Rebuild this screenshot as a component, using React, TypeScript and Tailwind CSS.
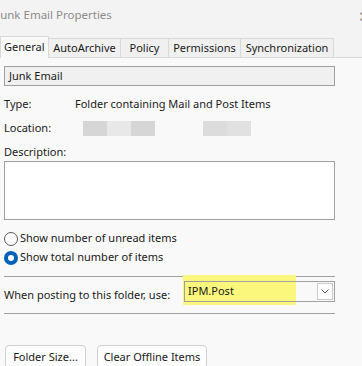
import React from "react";

const tabs = [
  { name: "General", w: "w-[49px]" },
  { name: "AutoArchive", w: "w-[72px]" },
  { name: "Policy", w: "w-[48px]" },
  { name: "Permissions", w: "w-[72px]" },
  { name: "Synchronization", w: "w-[93px]" },
];

function Radio({ checked, label }: { checked?: boolean; label: string }) {
  return (
    <div className="flex items-center h-[19px]">
      {checked ? (
        <span className="w-[14px] h-[14px] rounded-full bg-[#005fb8] flex items-center justify-center ml-[4px]">
          <span className="w-[6px] h-[6px] rounded-full bg-white" />
        </span>
      ) : (
        <span className="w-[14px] h-[14px] rounded-full border border-[#5a5a5a] bg-[#fcfcfc] ml-[4px]" />
      )}
      <span className="ml-[2px]">{label}</span>
    </div>
  );
}

export default function App() {
  return (
    <div
      className="w-[362px] h-[366px] overflow-hidden bg-[#f3f3f3] text-[11px] text-[#1a1a1a] relative"
      style={{ fontFamily: '"Segoe UI", "Noto Sans", sans-serif' }}
    >
      {/* title bar */}
      <div className="h-[37px] flex items-start pt-[6px]">
        <span className="ml-[-3px] text-[11.5px] text-[#8c8c8c]">Junk Email Properties</span>
      </div>
      <span className="absolute right-[-9px] top-[5px] text-[15px] text-[#8c8c8c]">✕</span>

      {/* tabs */}
      <div className="flex items-end h-[20px]">
        {tabs.map((t, i) =>
          i === 0 ? (
            <div
              key={t.name}
              className={`${t.w} h-[22px] pl-[3px] bg-[#f9f9f9] border border-b-0 border-[#d9d9d9] flex items-center relative z-10 mb-[-1px]`}
            >
              {t.name}
            </div>
          ) : (
            <div
              key={t.name}
              className={`${t.w} h-[19px] bg-[#f0f0f0] border border-l-0 border-b-0 border-[#d9d9d9] flex items-center justify-center`}
            >
              {t.name}
            </div>
          )
        )}
      </div>

      {/* panel */}
      <div className="border-t border-[#d9d9d9] bg-[#f9f9f9] h-[320px] pl-[4px] pr-[27px]">
        <div className="mt-[8px] h-[20px] border border-[#a0a0a0] bg-[#f0f0f0] flex items-center pl-[4px]">
          Junk Email
        </div>

        <div className="mt-[9px] flex h-[18px] items-center">
          <span className="w-[71px]">Type:</span>
          <span>Folder containing Mail and Post Items</span>
        </div>

        <div className="mt-[6px] flex h-[18px] items-center">
          <span className="w-[79px]">Location:</span>
          <div className="flex">
            <span className="w-[24px] h-[15px] bg-[#d6d6d6]" />
            <span className="w-[24px] h-[15px] bg-[#e8e8e8]" />
            <span className="w-[24px] h-[15px] bg-[#d6d6d6]" />
            <span className="w-[48px]" />
            <span className="w-[24px] h-[15px] bg-[#dddcdc]" />
            <span className="w-[24px] h-[15px] bg-[#e1e1e1]" />
          </div>
        </div>

        <div className="mt-[6px] h-[18px] flex items-center">Description:</div>
        <div className="h-[59px] border border-[#a0a0a0] bg-white" />

        <div className="mt-[9px] -ml-[4px]">
          <Radio label="Show number of unread items" />
          <Radio checked label="Show total number of items" />
        </div>

        <div className="mt-[9px] border-t border-[#a0a0a0]" />
        <div className="h-[36px] flex items-center relative">
          <span>When posting to this folder, use:</span>
          <span className="absolute left-[179px] top-[-2px] w-[113px] h-[30px] bg-[#fbf77d]" />
          <div className="absolute left-[180px] top-[4px] w-[151px] h-[21px] border border-[#a0a0a0] flex items-center">
            <span className="pl-[3px] relative">IPM.Post</span>
            <span className="ml-auto mr-[1px] w-[16px] h-[17px] border border-[#c8c8c8] bg-white flex items-center justify-center relative">
              <svg width="8" height="5" viewBox="0 0 8 5">
                <path d="M0.5 0.5 L4 4 L7.5 0.5" fill="none" stroke="#555" strokeWidth="1" />
              </svg>
            </span>
          </div>
        </div>
        <div className="border-t border-[#a0a0a0]" />

        <div className="mt-[31px] flex gap-[11px] pl-[1px]">
          <div className="w-[81px] h-[24px] border border-[#d0d0d0] rounded-[4px] bg-[#fdfdfd] flex items-center justify-center">
            Folder Size...
          </div>
          <div className="w-[110px] h-[24px] border border-[#d0d0d0] rounded-[4px] bg-[#fdfdfd] flex items-center justify-center">
            Clear Offline Items
          </div>
        </div>
      </div>
    </div>
  );
}
